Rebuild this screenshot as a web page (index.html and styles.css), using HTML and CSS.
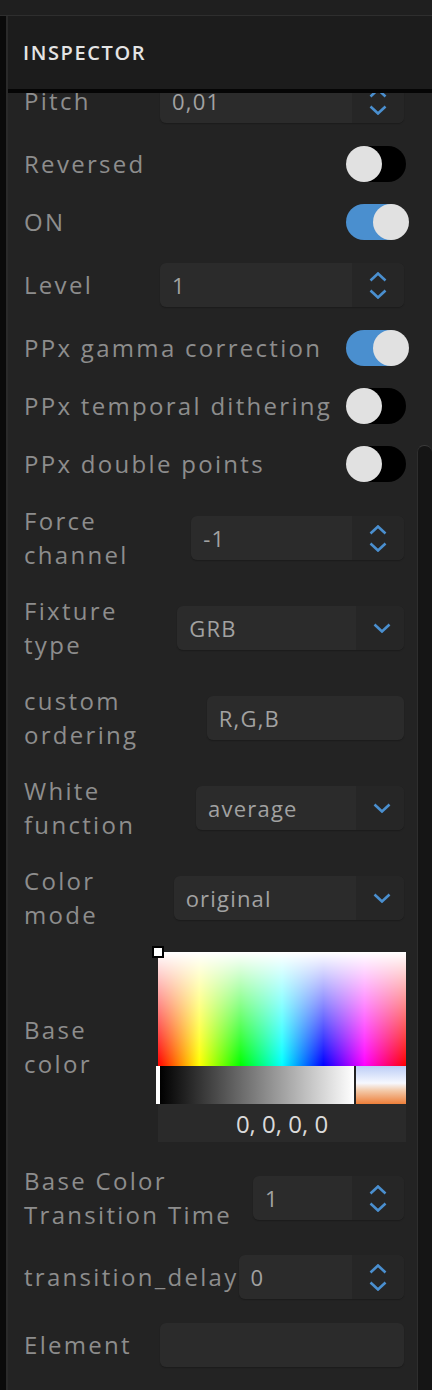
FILE: index.html
```html
<!DOCTYPE html>
<html lang="en">

<head>
    <meta charset="UTF-8">
    <meta name="viewport" content="width=device-width, initial-scale=1.0">
    <title>Inspector</title>
    <link rel="stylesheet" href="styles.css">
</head>

<body>
    <div class="topbar"></div>
    <div class="main">
        <div class="gutter"></div>
        <div class="panel">
            <div class="panel-head">INSPECTOR</div>
            <div class="panel-body">
                <div class="list">
                    <div class="row">
                        <span class="lbl">Pitch</span>
                        <div class="field">
                            <span class="val">0,01</span>
                            <div class="spin">
                                <svg viewBox="0 0 18 10"><polyline points="1.5,8.5 9,1.5 16.5,8.5" /></svg>
                                <svg viewBox="0 0 18 10"><polyline points="1.5,1.5 9,8.5 16.5,1.5" /></svg>
                            </div>
                        </div>
                    </div>
                    <div class="row">
                        <span class="lbl">Reversed</span>
                        <div class="toggle"><span class="knob"></span></div>
                    </div>
                    <div class="row">
                        <span class="lbl">ON</span>
                        <div class="toggle on"><span class="knob"></span></div>
                    </div>
                    <div class="row">
                        <span class="lbl">Level</span>
                        <div class="field">
                            <span class="val">1</span>
                            <div class="spin">
                                <svg viewBox="0 0 18 10"><polyline points="1.5,8.5 9,1.5 16.5,8.5" /></svg>
                                <svg viewBox="0 0 18 10"><polyline points="1.5,1.5 9,8.5 16.5,1.5" /></svg>
                            </div>
                        </div>
                    </div>
                    <div class="row">
                        <span class="lbl">PPx gamma correction</span>
                        <div class="toggle on"><span class="knob"></span></div>
                    </div>
                    <div class="row">
                        <span class="lbl">PPx temporal dithering</span>
                        <div class="toggle"><span class="knob"></span></div>
                    </div>
                    <div class="row">
                        <span class="lbl">PPx double points</span>
                        <div class="toggle"><span class="knob"></span></div>
                    </div>
                    <div class="row">
                        <span class="lbl">Force channel</span>
                        <div class="field">
                            <span class="val">-1</span>
                            <div class="spin">
                                <svg viewBox="0 0 18 10"><polyline points="1.5,8.5 9,1.5 16.5,8.5" /></svg>
                                <svg viewBox="0 0 18 10"><polyline points="1.5,1.5 9,8.5 16.5,1.5" /></svg>
                            </div>
                        </div>
                    </div>
                    <div class="row">
                        <span class="lbl">Fixture type</span>
                        <div class="field">
                            <span class="val">GRB</span>
                            <div class="drop">
                                <svg viewBox="0 0 18 10"><polyline points="1.5,1.5 9,8.5 16.5,1.5" /></svg>
                            </div>
                        </div>
                    </div>
                    <div class="row">
                        <span class="lbl">custom ordering</span>
                        <div class="field">
                            <span class="val">R,G,B</span>
                        </div>
                    </div>
                    <div class="row">
                        <span class="lbl">White function</span>
                        <div class="field">
                            <span class="val">average</span>
                            <div class="drop">
                                <svg viewBox="0 0 18 10"><polyline points="1.5,1.5 9,8.5 16.5,1.5" /></svg>
                            </div>
                        </div>
                    </div>
                    <div class="row">
                        <span class="lbl">Color mode</span>
                        <div class="field">
                            <span class="val">original</span>
                            <div class="drop">
                                <svg viewBox="0 0 18 10"><polyline points="1.5,1.5 9,8.5 16.5,1.5" /></svg>
                            </div>
                        </div>
                    </div>
                    <div class="row row-picker">
                        <span class="lbl">Base color</span>
                        <div class="picker">
                            <div class="hue">
                                <span class="hue-mark"></span>
                            </div>
                            <div class="picker-bottom">
                                <div class="gray"></div>
                                <div class="swatch"></div>
                            </div>
                            <div class="rgba">0, 0, 0, 0</div>
                        </div>
                    </div>
                    <div class="row">
                        <span class="lbl">Base Color Transition Time</span>
                        <div class="field">
                            <span class="val">1</span>
                            <div class="spin">
                                <svg viewBox="0 0 18 10"><polyline points="1.5,8.5 9,1.5 16.5,8.5" /></svg>
                                <svg viewBox="0 0 18 10"><polyline points="1.5,1.5 9,8.5 16.5,1.5" /></svg>
                            </div>
                        </div>
                    </div>
                    <div class="row">
                        <span class="lbl">transition_delay</span>
                        <div class="field">
                            <span class="val">0</span>
                            <div class="spin">
                                <svg viewBox="0 0 18 10"><polyline points="1.5,8.5 9,1.5 16.5,8.5" /></svg>
                                <svg viewBox="0 0 18 10"><polyline points="1.5,1.5 9,8.5 16.5,1.5" /></svg>
                            </div>
                        </div>
                    </div>
                    <div class="row">
                        <span class="lbl">Element</span>
                        <div class="field"></div>
                    </div>
                </div>
                <div class="scroll"></div>
            </div>
        </div>
    </div>
</body>

</html>
```
FILE: styles.css
```css
body {
    margin: 0;
    height: 1390px;
    overflow: hidden;
    background-color: #111;
    font-family: 'Open Sans', 'DejaVu Sans', sans-serif;
    display: flex;
    flex-direction: column;
}

.topbar {
    height: 15px;
    background-color: #1f1f1f;
    border-bottom: 1px solid #2e2e2e;
}

.main {
    flex: 1;
    display: flex;
    min-height: 0;
}

.gutter {
    width: 6px;
    background-color: #0a0a0a;
}

.panel {
    flex: 1;
    display: flex;
    flex-direction: column;
    border-left: 2px solid #2a2a2a;
    min-height: 0;
}

.panel-head {
    height: 73px;
    display: flex;
    align-items: center;
    padding-left: 15px;
    background-color: #1c1c1c;
    border-bottom: 4px solid #050505;
    color: #e4e4e4;
    font-size: 20px;
    font-weight: 600;
    letter-spacing: 1.6px;
}

.panel-body {
    position: relative;
    flex: 1;
    overflow: hidden;
    background-color: #232323;
}

.list {
    margin-top: -26px;
    padding: 0 28px 0 16px;
}

.row {
    display: flex;
    align-items: center;
    padding: 11px 0;
    min-height: 36px;
}

.row-picker {
    padding: 9px 0 11px;
}

.lbl {
    flex: 1 1 auto;
    color: #8d8d8d;
    font-size: 24px;
    letter-spacing: 2.3px;
    line-height: 34px;
}

.field {
    flex: 1 1 237px;
    max-width: 244px;
    height: 44px;
    margin: 1px 0;
    display: flex;
    align-items: center;
    background-color: #2b2b2b;
    border-radius: 6px;
    box-shadow: 0 1px 1px #1c1c1c;
    overflow: hidden;
}

.val {
    flex: 1;
    padding-left: 12px;
    color: #a2a2a2;
    font-size: 22px;
    letter-spacing: 1.2px;
}

.spin,
.drop {
    height: 100%;
    display: flex;
    flex-direction: column;
    align-items: center;
    justify-content: center;
    background-color: #262626;
}

.spin {
    width: 52px;
    gap: 7px;
}

.drop {
    width: 48px;
}

.spin svg,
.drop svg {
    width: 18px;
    height: 10px;
    fill: none;
    stroke: #4a8fcf;
    stroke-width: 2.6;
}

.drop svg {
    margin-right: -4px;
}

.toggle {
    position: relative;
    flex: none;
    width: 60px;
    height: 36px;
    margin-left: 8px;
    margin-right: -2px;
    border-radius: 18px;
    background-color: #000;
}

.toggle .knob {
    position: absolute;
    top: 0;
    left: 0;
    width: 36px;
    height: 36px;
    border-radius: 50%;
    background-color: #e1e1e1;
}

.toggle.on {
    background-color: #4a8fcf;
}

.toggle.on .knob {
    left: 27px;
}

.picker {
    flex: 0 0 248px;
    display: flex;
    flex-direction: column;
    margin-right: -2px;
}

.hue {
    position: relative;
    height: 114px;
    background-image: linear-gradient(to bottom, #fff, rgba(255, 255, 255, 0) 100%),
        linear-gradient(to right, #f00 0%, #ff0 16.7%, #0f0 33.3%, #0ff 50%, #00f 66.7%, #f0f 83.3%, #f00 100%);
}

.hue-mark {
    position: absolute;
    top: -6px;
    left: -6px;
    width: 8px;
    height: 8px;
    border: 2px solid #000;
    background-color: #fff;
}

.picker-bottom {
    display: flex;
    height: 38px;
    gap: 2px;
}

.gray {
    flex: 1;
    margin-left: -2px;
    border-left: 4px solid #fff;
    background-image: linear-gradient(to right, #000, #fff);
}

.swatch {
    width: 50px;
    background-image: linear-gradient(to bottom, #bccdf6, #f6f8ff 45%, #f3c9a8 65%, #ee7f3a 100%);
}

.rgba {
    height: 38px;
    display: flex;
    align-items: center;
    justify-content: center;
    background-color: #2a2a2a;
    color: #dadada;
    font-size: 24px;
}

.scroll {
    position: absolute;
    top: 352px;
    right: 0;
    bottom: 0;
    width: 14px;
    border-top: 1px solid #3a3a3a;
    border-left: 1px solid #2e2e2e;
    border-radius: 7px 7px 0 0;
    background-color: #151515;
}
```
